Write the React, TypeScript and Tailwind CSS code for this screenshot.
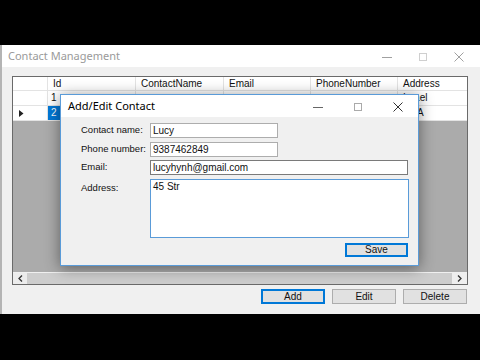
import React from "react";

const Min = ({ c }: { c: string }) => (
  <svg width="10" height="10" viewBox="0 0 10 10"><line x1="0" y1="5.5" x2="10" y2="5.5" stroke={c} strokeWidth="1" /></svg>
);
const Max = ({ c }: { c: string }) => (
  <svg width="10" height="10" viewBox="0 0 10 10"><rect x="1.5" y="1.5" width="7" height="7" fill="none" stroke={c} strokeWidth="1" /></svg>
);
const Close = ({ c }: { c: string }) => (
  <svg width="10" height="10" viewBox="0 0 10 10"><path d="M0.5 0.5 L9.5 9.5 M9.5 0.5 L0.5 9.5" stroke={c} strokeWidth="1" /></svg>
);

const cols = [
  { w: "w-[88px]", label: "Id" },
  { w: "w-[88px]", label: "ContactName" },
  { w: "w-[87px]", label: "Email" },
  { w: "w-[87px]", label: "PhoneNumber" },
];

export default function App() {
  return (
    <div className="relative w-[480px] h-[360px] bg-black overflow-hidden font-['Liberation_Sans',Arial,sans-serif] text-[10px] text-[#111]">
      <div className="h-[45px]" />
      <div className="h-[269px] flex flex-col bg-[#f0f0f0] border-l-2 border-[#b4b4b4]">
        {/* title bar */}
        <div className="h-[22px] bg-white flex items-center pl-[6px] shrink-0">
          <span className="font-['Noto_Sans',sans-serif] text-[11px] text-[#9a9a9a] flex-1">Contact Management</span>
          <div className="flex items-center gap-[26px] pr-[16px] pt-[1px]">
            <Min c="#a0a0a0" />
            <Max c="#cfcfcf" />
            <Close c="#a0a0a0" />
          </div>
        </div>
        {/* body */}
        <div className="flex-1 flex flex-col pl-[10px] pr-[12px] pt-[9px]">
          <div className="h-[209px] border border-[#6a6a6a] bg-[#ababab] flex flex-col">
            {/* header */}
            <div className="h-[14px] bg-white flex border-b border-[#e3e3e3]">
              <div className="w-[35px] border-r border-[#e3e3e3]" />
              {cols.map((c) => (
                <div key={c.label} className={`${c.w} border-r border-[#e3e3e3] pl-[5px] leading-[13px]`}>{c.label}</div>
              ))}
              <div className="flex-1 pl-[5px] leading-[13px]">Address</div>
            </div>
            {/* row 1 */}
            <div className="h-[15px] bg-white flex border-b border-[#e3e3e3]">
              <div className="w-[35px] border-r border-[#e3e3e3]" />
              <div className="w-[88px] border-r border-[#e3e3e3] pl-[3px] leading-[14px]">1</div>
              <div className="w-[88px] border-r border-[#e3e3e3]" />
              <div className="w-[87px] border-r border-[#e3e3e3]" />
              <div className="w-[87px] border-r border-[#e3e3e3]" />
              <div className="flex-1 pl-[5px] leading-[14px]">Israel</div>
            </div>
            {/* row 2 */}
            <div className="h-[15px] bg-white flex border-b border-[#e3e3e3]">
              <div className="w-[35px] border-r border-[#e3e3e3] flex items-center pl-[6px]">
                <svg width="5" height="7" viewBox="0 0 5 7"><path d="M0 0 L4.5 3.5 L0 7 Z" fill="#222" /></svg>
              </div>
              <div className="w-[88px] border-r border-[#e3e3e3] bg-[#0078d7] text-white pl-[3px] leading-[14px]">2</div>
              <div className="w-[88px] border-r border-[#e3e3e3]" />
              <div className="w-[87px] border-r border-[#e3e3e3]" />
              <div className="w-[87px] border-r border-[#e3e3e3]" />
              <div className="flex-1 pl-[5px] leading-[14px]">USA</div>
            </div>
            <div className="flex-1" />
            {/* scrollbar */}
            <div className="h-[12px] flex bg-[#e6e6e6] border-t border-[#f0f0f0]">
              <div className="w-[14px] bg-[#ececec] flex items-center justify-center">
                <svg width="5" height="7" viewBox="0 0 5 7"><path d="M4 0.5 L1 3.5 L4 6.5" fill="none" stroke="#333" strokeWidth="1.3" /></svg>
              </div>
              <div className="flex-1 bg-[#cdcdcd]" />
              <div className="w-[15px] bg-[#efefef] flex items-center justify-center">
                <svg width="5" height="7" viewBox="0 0 5 7"><path d="M1 0.5 L4 3.5 L1 6.5" fill="none" stroke="#333" strokeWidth="1.3" /></svg>
              </div>
            </div>
          </div>
          {/* buttons */}
          <div className="flex justify-end gap-[7px] mt-[4px] pr-[1px]">
            <button className="w-[64px] h-[15px] border-2 border-[#0078d7] bg-[#e1e1e1] text-[10px] leading-[11px]">Add</button>
            <button className="w-[64px] h-[15px] border border-[#adadad] bg-[#e1e1e1] text-[10px] leading-[13px]">Edit</button>
            <button className="w-[64px] h-[15px] border border-[#adadad] bg-[#e1e1e1] text-[10px] leading-[13px]">Delete</button>
          </div>
        </div>
      </div>

      {/* dialog */}
      <div className="absolute left-[60px] top-[94px] w-[359px] h-[172px] border border-[#5a9bd8] bg-[#f0f0f0] flex flex-col shadow-[0_2px_14px_rgba(0,0,0,0.45)]">
        <div className="h-[22px] bg-white flex items-center pl-[7px] shrink-0">
          <span className="font-['Noto_Sans',sans-serif] text-[11px] text-black flex-1">Add/Edit Contact</span>
          <div className="flex items-center gap-[30px] pr-[15px] pt-[1px]">
            <Min c="#666" />
            <Max c="#aaa" />
            <Close c="#333" />
          </div>
        </div>
        <div className="flex flex-col pl-[20px] pt-[6px] pr-[9px] text-[9.5px]">
          <div className="flex items-center h-[15px]">
            <div className="w-[69px]">Contact name:</div>
            <div className="w-[128px] h-[15px] bg-white border border-[#adadad] pl-[2px] leading-[13px] text-[10px]">Lucy</div>
          </div>
          <div className="flex items-center h-[15px] mt-[4px]">
            <div className="w-[69px]">Phone number:</div>
            <div className="w-[128px] h-[15px] bg-white border border-[#adadad] pl-[2px] leading-[13px] text-[10px]">9387462849</div>
          </div>
          <div className="flex items-center h-[15px] mt-[3px]">
            <div className="w-[69px]">Email:</div>
            <div className="w-[258px] h-[15px] bg-white border border-[#7a7a7a] pl-[2px] leading-[13px] text-[10px]">lucyhynh@gmail.com</div>
          </div>
          <div className="flex items-start mt-[4px]">
            <div className="w-[69px] pt-[2px]">Address:</div>
            <div className="w-[259px] h-[59px] bg-white border border-[#5a9bd8] pl-[2px] leading-[13px] text-[10px]">45 Str</div>
          </div>
          <div className="flex justify-end mt-[5px] pr-[1px]">
            <button className="w-[63px] h-[14px] border-2 border-[#0078d7] bg-[#e1e1e1] text-[10px] leading-[10px]">Save</button>
          </div>
        </div>
      </div>
    </div>
  );
}
